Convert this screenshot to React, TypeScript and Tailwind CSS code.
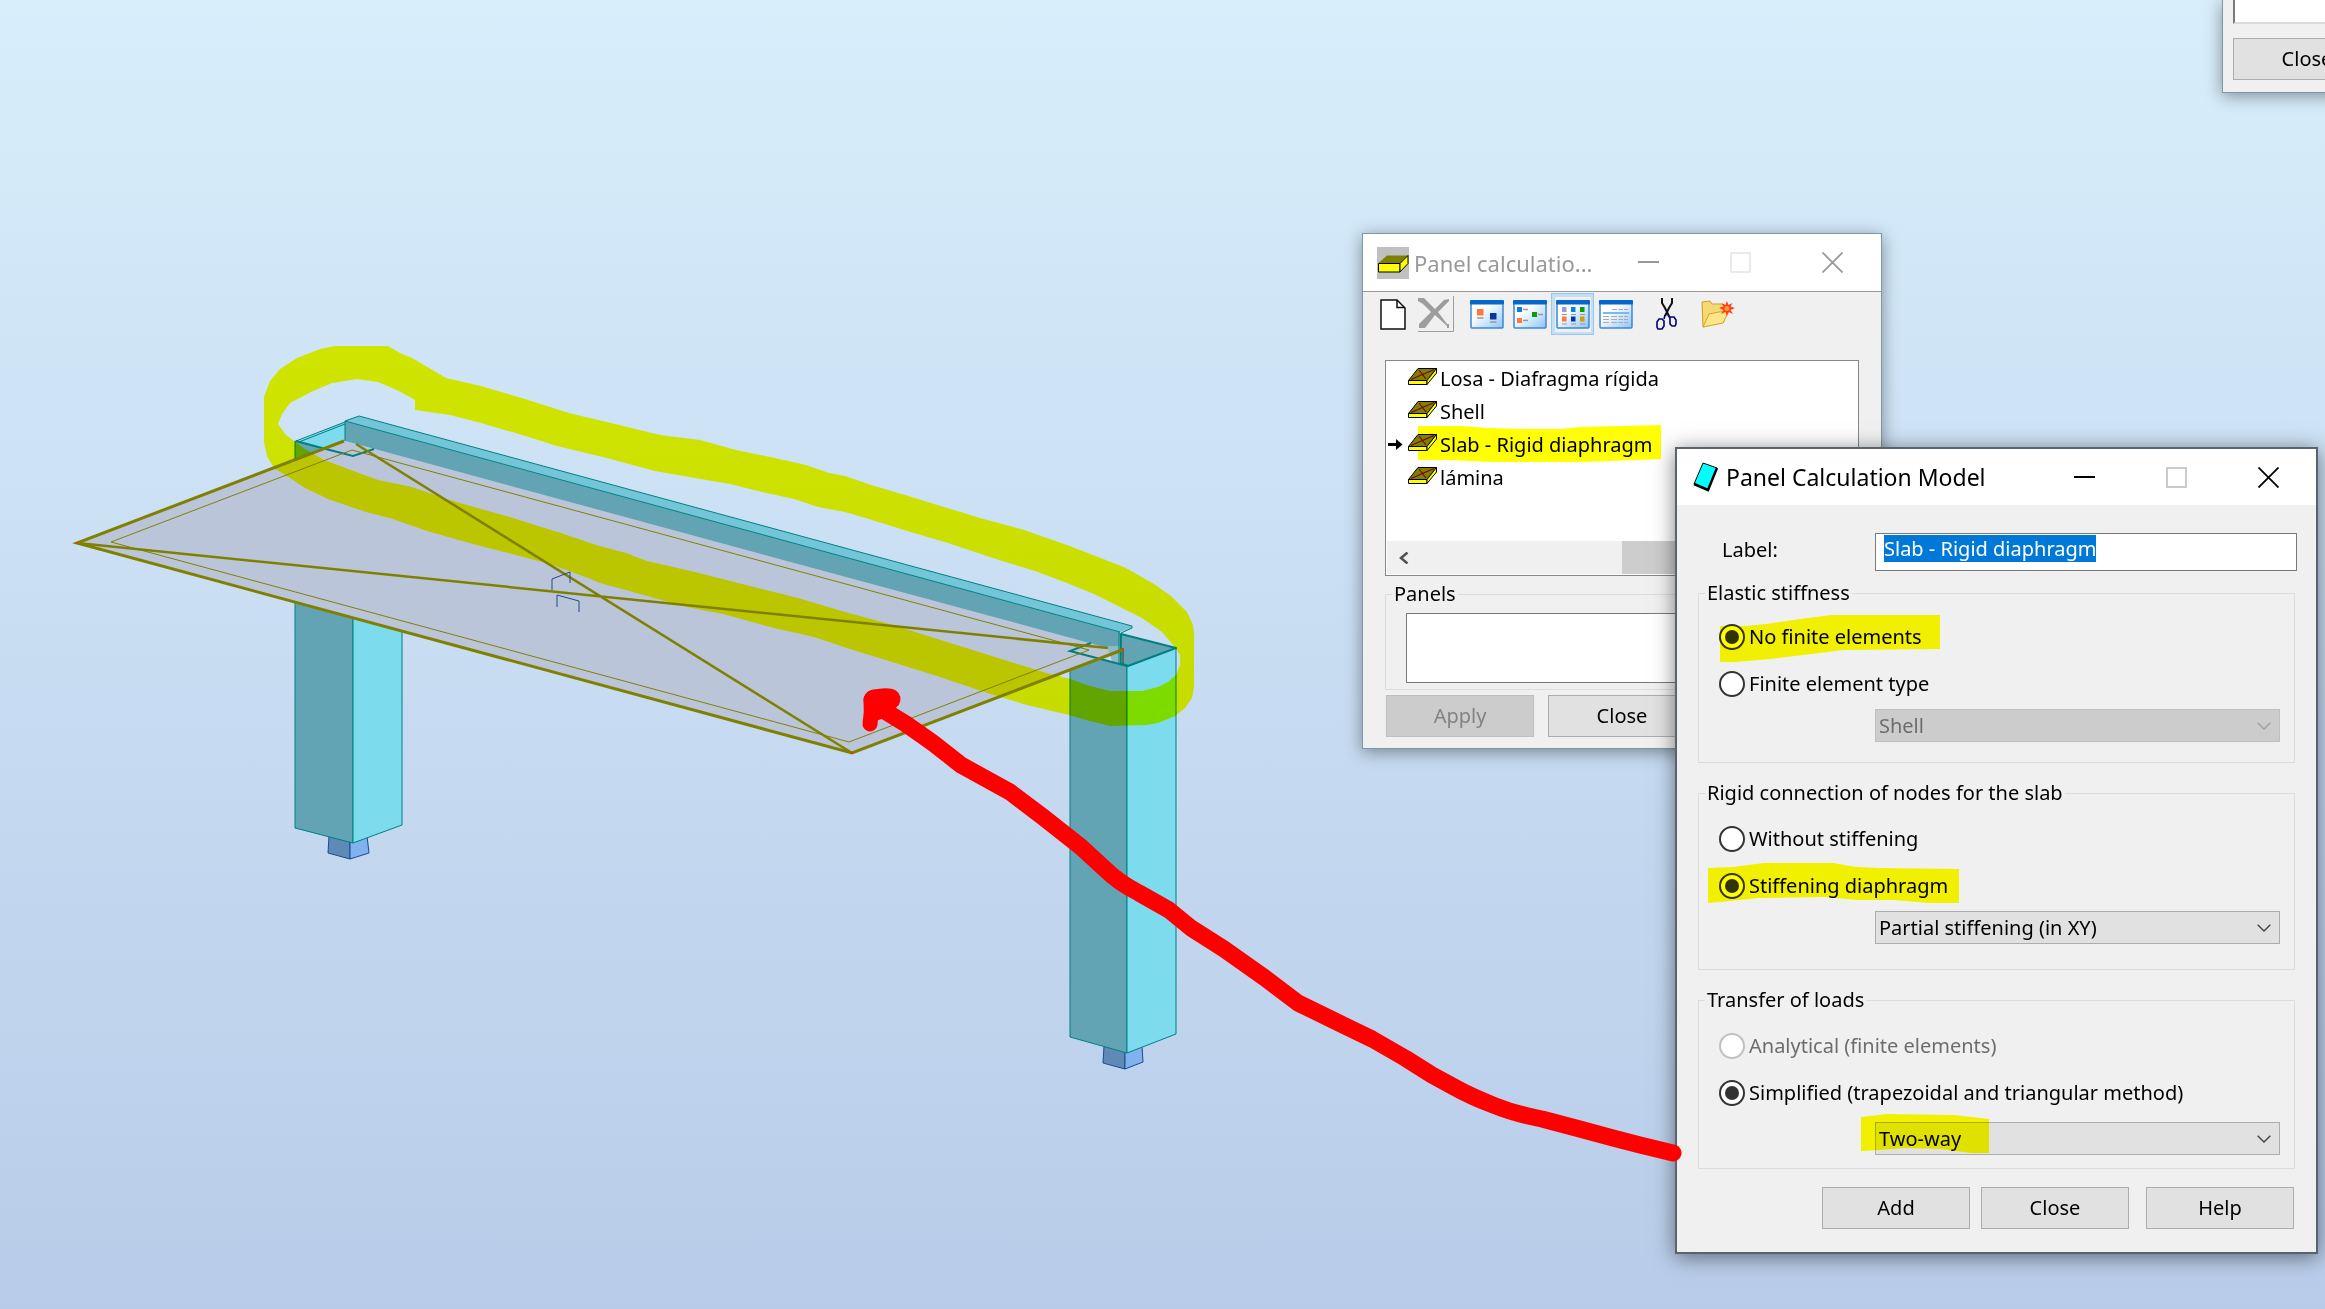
import { useEffect, useRef, useState, type ReactNode } from "react";

/* ---------- 3D model view ---------- */

const MARKER_RING =
  "M335 346 L388 346 L400 353 L412 358 L446 378 L481 386 L525 399 L569 413 L615 424 L660 435 L700 440 L736 450 L770 457 L806 465 L829 473 L845 476 L871 485 L905 495 L944 507 L980 518 L1021 529 L1067 545 L1098 557 L1126 568 L1154 584 L1171 596 L1187 612 L1193 625 L1194 633 L1194 687 L1192 698 L1185 708 L1175 716 L1158 723 L1146 725 L1110 726 L1090 721 L1069 715 L1027 705 L984 692 L940 677 L889 661 L853 650 L814 637 L774 628 L723 614 L687 607 L640 594 L600 583 L588 578 L550 564 L512 554 L473 544 L427 531 L393 519 L366 512 L328 499 L305 488 L290 478 L274 468 L267 456 L264 442 L264 397 L270 381 L280 369 L297 358 L320 349 Z " +
  "M415 410 L415 400 L399 391 L378 382 L357 379 L332 383 L313 391 L290 403 L282 414 L278 424 L286 435 L305 449 L324 460 L351 470 L378 480 L412 487 L446 499 L481 509 L510 517 L538 526 L561 533 L596 545 L626 553 L647 561 L695 572 L750 586 L798 598 L845 612 L893 625 L944 641 L995 657 L1043 672 L1070 679 L1090 686 L1110 691 L1142 691 L1158 687 L1168 682 L1176 675 L1180 665 L1180 655 L1175 647 L1162 632 L1142 618 L1118 606 L1094 594 L1067 583 L1035 571 L999 560 L948 543 L904 530 L869 519 L845 512 L818 507 L794 499 L758 491 L730 484 L695 478 L655 471 L607 458 L557 446 L519 434 L481 423 L450 415 Z";

const ARROW_LINE =
  "M1673 1153 L1640 1145 L1613 1138 L1576 1128 L1542 1119 Q1515 1114 1493 1105 Q1470 1096 1454 1087 L1432 1075 L1405 1058 L1372 1039 L1339 1023 L1298 1003 L1265 978 L1224 949 L1191 928 L1169 910 L1139 893 Q1118 882 1106 870 L1081 847 L1043 817 L1010 792 L961 765 L933 743 L906 724 L880 708";

function ModelView() {
  return (
    <svg viewBox="0 0 2325 1309" className="block h-auto w-full" role="img" aria-label="Model view">
      <g stroke="#008080" strokeWidth="1" strokeLinejoin="round">
        {/* left column */}
        <g stroke="#1c4a8c">
          <path d="M329 836 L328 853 L350 859 L350 836 Z" fill="#5f8ab8" />
          <path d="M350 836 V859 L369 853 L367 836 Z" fill="#80b2ef" />
        </g>
        <path d="M295 441 L353 456 V843 L295 828 Z" fill="#62a4b4" />
        <path d="M353 600 V843 L402 825 V600 Z" fill="#7ddbee" />
        {/* right column */}
        <g stroke="#1c4a8c">
          <path d="M1104 1046 L1103 1063 L1125 1069 V1046 Z" fill="#5f8ab8" />
          <path d="M1125 1046 V1069 L1143 1062 L1142 1046 Z" fill="#80b2ef" />
        </g>
        <path d="M1070 651 L1127 666 V1053 L1070 1037 Z" fill="#62a4b4" />
        <path d="M1127 666 V1053 L1176 1034 V648 Z" fill="#7ddbee" />
        <path d="M1121 634 L1176 648 L1128 666 L1120 663 Z" fill="#62a4b4" strokeWidth="2" />
      </g>
      {/* column head behind the beam */}
      <path d="M298 441 L345 422 V441 L322 448 Z" fill="#7ddbee" />
      {/* slab */}
      <path d="M77 543 L344 441 L1122 650 L852 753 Z" fill="#bbc5d9" />
      {/* beam */}
      <path d="M345 421 L1120 632 L1119 651 L345 441 Z" fill="#62a4b4" />
      <path d="M1107 646 L1120 646 V664 L1112 661 Z" fill="#8fb8c9" />
      <path d="M345 421 L359 416 L1132 626 L1132 628 L1120 632 Z" fill="#73c6d8" />
      <g fill="none" stroke="#008080" strokeWidth="1">
        <path d="M345 441 V421 L359 416 L1132 626 L1132 628 L1121 633 V664 M345 421 L1120 632 M1119 632 V663" />
        <path d="M296 441 L345 422 M299 442 L345 424" />
        <path d="M322 448 L353 456 L374 449 M296 441 L322 448" strokeWidth="2" />
        <path d="M1091 643 L1070 651 L1127 666" strokeWidth="2" />
        <path d="M1123 648 V663" stroke="#404000" />
      </g>
      <g fill="none" stroke="#808000">
        <path d="M344 441 L77 543 L852 753 L1122 650" strokeWidth="3" />
        <path d="M77 543 L1108 648 M356 444 L852 753" strokeWidth="2.5" />
        <path d="M352 450 L111 542 L849 742 L1089 650 Z" strokeWidth="1" />
      </g>
      <path d="M76 542 h2 v2 h-2 Z M851 752 h2 v2 h-2 Z M1122 648 h2 v2 h-2 Z" fill="#ff3000" />
      {/* local axis marks */}
      <path
        d="M552 590 V579 L570 572 V583 M557 607 V595 L579 601 V612"
        fill="none"
        stroke="#1c4a8c"
        strokeWidth="1"
      />
      {/* highlighter ring */}
      <path d={MARKER_RING} fill="#ffff00" fillRule="evenodd" className="mix-blend-multiply" />
    </svg>
  );
}

function ArrowMark() {
  return (
    <svg viewBox="0 0 2325 1309" className="pointer-events-none absolute inset-x-0 top-0 h-auto w-full" aria-hidden="true">
      <g fill="none" stroke="#ff0000" strokeLinecap="round" strokeLinejoin="round">
        <path d={ARROW_LINE} strokeWidth="17" />
        <path d="M874 700 Q884 698 890 699" strokeWidth="21" />
        <path d="M871 700 Q872 712 870 724" strokeWidth="15" />
      </g>
      <path d="M864 696 L895 708 L890 716 L873 722 Z" fill="#ff0000" />
    </svg>
  );
}

/* ---------- Icons ---------- */

function SlabTitleIcon() {
  return (
    <svg width="32" height="32" viewBox="0 0 32 32" className="shrink-0" aria-hidden="true">
      <rect width="32" height="32" fill="#c0c0c0" />
      <g stroke="#000" strokeWidth="1">
        <path d="M1 16.5 L10 8.5 H31 L23 16.5 Z" fill="#808000" stroke="none" />
        <path d="M1.500 16.500 H23 V25 H1.500 Z" fill="#ffff00" />
        <path d="M31 8.500 V16.500 L23 25 V16.500 Z" fill="#ffff00" />
      </g>
    </svg>
  );
}

function SlabItemIcon() {
  return (
    <svg width="29" height="17" viewBox="0 0 29 17" className="shrink-0" aria-hidden="true">
      <g stroke="#000" strokeWidth="1">
        <path d="M.5 12.5 L10 .5 H28.500 L19 12.500 Z" fill="#808000" />
        <path d="M.5 12.500 H19 V16.500 H.5 Z" fill="#ffff00" />
        <path d="M28.500 .5 V5 L19 16.500 V12.500 Z" fill="#ffff00" />
      </g>
      <path d="M3 11.500 L26 1.500 M11 2 L18 11" stroke="#800000" strokeWidth="1.200" fill="none" />
    </svg>
  );
}

function PlateIcon() {
  return (
    <svg width="25" height="30" viewBox="0 0 25 30" className="shrink-0" aria-hidden="true">
      <path d="M10 1 L24 6 L15 28 L1 22 Z" fill="#00ffff" stroke="#000" strokeWidth="1" />
      <path d="M24 6 L15 28 L1 22" fill="none" stroke="#000" strokeWidth="2.500" />
    </svg>
  );
}

function NewIcon() {
  return (
    <svg width="26" height="31" viewBox="0 0 26 31" aria-hidden="true">
      <path d="M1 1 H17 L25 9 V30 H1 Z" fill="#fff" stroke="#111" strokeWidth="1.500" />
      <path d="M17 1 V8.500 H25" fill="none" stroke="#111" strokeWidth="1.500" />
    </svg>
  );
}

function DeleteIcon() {
  return (
    <svg width="36" height="36" viewBox="0 0 36 36" aria-hidden="true">
      <path
        d="M0 2 H6 L17 13 L26 4 L31 3 V5 L20 16 L29 28 H31 V32 H29 V30 L17 19 L7 32 H1 V28 L13 16 L5 8 L0 5 Z"
        fill="#9d9d9d"
      />
      <path d="M35.500 0 V35.500 H0" fill="none" stroke="#9d9d9d" />
    </svg>
  );
}

function ViewFrame({ children }: { children: ReactNode }) {
  return (
    <svg width="34" height="29" viewBox="0 0 34 29" aria-hidden="true">
      <defs>
        <linearGradient id="pane" x1="0" y1="0" x2="1" y2="1">
          <stop offset="0.35" stopColor="#ffffff" />
          <stop offset="1" stopColor="#8cc4f8" />
        </linearGradient>
      </defs>
      <rect x="1" y="1" width="32" height="27" rx="1" fill="url(#pane)" stroke="#3b86d4" strokeWidth="1.500" />
      <rect x="0" y="0" width="34" height="4.500" rx="1" fill="#0765cc" />
      {children}
    </svg>
  );
}

function LargeIconsIcon() {
  return (
    <ViewFrame>
      <rect x="7" y="9" width="6.500" height="6.500" fill="#ff7740" />
      <rect x="20" y="13" width="6.500" height="6.500" fill="#0a35a0" />
      <path d="M7 18 H13.500 M20 22 H26.500" stroke="#999" strokeWidth="1.500" />
    </ViewFrame>
  );
}

function SmallIconsIcon() {
  return (
    <ViewFrame>
      <rect x="4" y="7" width="5" height="5" fill="#0a7ee8" />
      <rect x="4" y="18" width="5" height="5" fill="#ff7740" />
      <rect x="19" y="12" width="5" height="5" fill="#0a9a0a" />
      <path d="M10 9.500 H15 M10 20.500 H15 M25 14.500 H30" stroke="#999" strokeWidth="1.500" />
    </ViewFrame>
  );
}

function ListIcon() {
  return (
    <ViewFrame>
      <rect x="6" y="7" width="4.500" height="5" fill="#a096d8" />
      <rect x="15" y="7" width="4.500" height="5" fill="#0a7ee8" />
      <rect x="24" y="7" width="4.500" height="5" fill="#0a9a0a" />
      <rect x="6" y="16.500" width="4.500" height="5" fill="#ff7740" />
      <rect x="15" y="16.500" width="4.500" height="5" fill="#0a35a0" />
      <rect x="24" y="16.500" width="4.500" height="5" fill="#d0a000" />
      <path d="M6 14.500 H11 M15 14.500 H20 M24 14.500 H29 M6 24 H11 M15 24 H20 M24 24 H29" stroke="#999" strokeWidth="1.200" />
    </ViewFrame>
  );
}

function DetailsIcon() {
  return (
    <ViewFrame>
      <path d="M4 13 H30" stroke="#7ab8f4" strokeWidth="2" />
      <path
        d="M13 9.500 H18 M19.500 9.500 H24 M25 9.500 H29 M4 16.500 H10 M12 16.500 H18 M19.500 16.500 H24 M25 16.500 H29 M4 19.500 H10 M12 19.500 H18 M19.500 19.500 H24 M25 19.500 H29 M4 22.500 H10 M12 22.500 H18 M19.500 22.500 H24 M25 22.500 H29"
        stroke="#aaa"
        strokeWidth="1.200"
      />
    </ViewFrame>
  );
}

function CutIcon() {
  return (
    <svg width="22" height="34" viewBox="0 0 22 34" fill="none" aria-hidden="true">
      <path d="M6 1 V6 L9 11 L13 19 M16 1 V6 L13 11 L9 19" stroke="#111" strokeWidth="2" />
      <path
        d="M9 18 L8 22 M12 18 L14 21 M3 22 H6 L8 24 V29 L6 32 H2 L1 30 V25 Z M14 20 H18 L20 23 V27 L19 29 H16 L14 27 Z"
        stroke="#00007d"
        strokeWidth="1.600"
      />
    </svg>
  );
}

function FolderIcon() {
  return (
    <svg width="34" height="29" viewBox="0 0 34 29" aria-hidden="true">
      <path d="M1 2 L9 1 L11 4 H21 L23 6 V22 L2 27 Z" fill="#f6d976" stroke="#cf9f1c" strokeWidth="1" />
      <path d="M2 27 L8 14 L18 12 L28 11 L22 23 Z" fill="#ffe68c" stroke="#d8a420" strokeWidth="1" />
      <path
        d="M26 1 L27.500 5 L31.500 3 L29.500 6.500 L34 8 L29.500 10 L32 14 L27.500 12 L26 16 L24.500 12 L20 14 L22.500 10 L18 8 L22.500 6.500 L20.500 3 L24.500 5 Z"
        fill="#ff3c14"
      />
      <circle cx="26" cy="8.500" r="2.500" fill="#ff9a3c" />
    </svg>
  );
}

function Chevron({ className }: { className: string }) {
  return (
    <svg width="14" height="8" viewBox="0 0 14 8" className={className} aria-hidden="true">
      <path d="M.7 .7 L7 7 L13.300 .7" fill="none" stroke="currentColor" strokeWidth="1.400" />
    </svg>
  );
}

/* ---------- Shared controls ---------- */

function Highlight({ points }: { points: string }) {
  return (
    <svg className="pointer-events-none absolute left-0 top-0 h-px w-px overflow-visible mix-blend-multiply" aria-hidden="true">
      <polygon points={points} fill="#ffff00" />
    </svg>
  );
}

function CaptionButtons({ tone }: { tone: string }) {
  return (
    <div className={`ml-auto flex h-full ${tone}`}>
      <button type="button" aria-label="Minimize" className="grid h-full w-[92px] place-items-center">
        <svg width="21" height="21" viewBox="0 0 21 21" aria-hidden="true">
          <path d="M0 10 H21" stroke="currentColor" strokeWidth="2" />
        </svg>
      </button>
      <button type="button" aria-label="Maximize" disabled className="grid h-full w-[92px] place-items-center opacity-20">
        <svg width="21" height="21" viewBox="0 0 21 21" aria-hidden="true">
          <rect x="1" y="1" width="19" height="19" fill="none" stroke="currentColor" strokeWidth="2" />
        </svg>
      </button>
      <button type="button" aria-label="Close window" className="grid h-full w-[92px] place-items-center">
        <svg width="21" height="21" viewBox="0 0 21 21" aria-hidden="true">
          <path d="M.5 .5 L20.500 20.500 M20.500 .5 L.5 20.500" stroke="currentColor" strokeWidth="1.800" />
        </svg>
      </button>
    </div>
  );
}

function PushButton({ children, disabled = false }: { children: ReactNode; disabled?: boolean }) {
  return (
    <button
      type="button"
      disabled={disabled}
      className="h-[42px] w-[148px] shrink-0 border border-[#adadad] bg-[#e1e1e1] text-black disabled:border-[#bfbfbf] disabled:bg-[#cccccc] disabled:text-[#838383]"
    >
      {children}
    </button>
  );
}

function Radio(props: {
  name: string;
  label: string;
  checked: boolean;
  onSelect?: () => void;
  disabled?: boolean;
  highlight?: string;
}) {
  const { name, label, checked, onSelect, disabled = false, highlight } = props;
  return (
    <label className="relative flex h-[26px] w-fit items-center gap-1">
      <input
        type="radio"
        name={name}
        checked={checked}
        disabled={disabled}
        onChange={() => onSelect?.()}
        className="grid size-[26px] shrink-0 appearance-none place-items-center rounded-full border-2 border-[#333333] bg-white before:size-[14px] before:rounded-full checked:before:bg-[#333333] disabled:border-[#c0c0c0]"
      />
      <span className={disabled ? "whitespace-nowrap text-[#6d6d6d]" : "whitespace-nowrap text-black"}>{label}</span>
      {highlight && <Highlight points={highlight} />}
    </label>
  );
}

function DropDown(props: { label: string; options: string[]; disabled?: boolean; highlight?: string }) {
  const { label, options, disabled = false, highlight } = props;
  return (
    <div className="relative ml-[156px] mr-[14px]">
      <select
        aria-label={label}
        disabled={disabled}
        className="block h-[33px] w-full appearance-none border border-[#adadad] bg-[#e1e1e1] pl-[3px] pr-8 text-black opacity-100 disabled:border-[#bfbfbf] disabled:bg-[#cccccc] disabled:text-[#6d6d6d]"
      >
        {options.map((option) => (
          <option key={option}>{option}</option>
        ))}
      </select>
      <Chevron
        className={
          disabled
            ? "pointer-events-none absolute right-[9px] top-[13px] text-[#a0a0a0]"
            : "pointer-events-none absolute right-[9px] top-[13px] text-[#444444]"
        }
      />
      {highlight && <Highlight points={highlight} />}
    </div>
  );
}

function Group({ title, className, children }: { title: string; className: string; children: ReactNode }) {
  return (
    <fieldset className="min-w-0 border border-[#dcdcdc]">
      <legend className="ml-[6px] whitespace-nowrap px-0.5 leading-6">{title}</legend>
      <div className={className}>{children}</div>
    </fieldset>
  );
}

/* ---------- Windows ---------- */

const PANEL_TYPES: { name: string; highlight?: string }[] = [
  { name: "Losa - Diafragma rígida" },
  { name: "Shell" },
  {
    name: "Slab - Rigid diaphragm",
    highlight: "32,-2 76,-2 102,0 143,1 174,1 195,-1 275,-3 275,31 198,34 106,34 64,32 32,32",
  },
  { name: "lámina" },
];

const TOOL = "grid h-[42px] w-[43px] place-items-center";

function PanelListWindow() {
  return (
    <section
      aria-label="Panel calculation"
      className="absolute left-[1362px] top-[233px] w-[520px] border border-[#7f95a8] bg-[#f0f0f0] shadow-[0_3px_16px_rgba(0,0,0,0.4)]"
    >
      <header className="flex h-[58px] items-center border-b border-[#999999] bg-white pl-[14px] pr-[3px]">
        <SlabTitleIcon />
        <h2 className="ml-[5px] whitespace-nowrap text-[22px] leading-7 text-[#999999]">Panel calculatio...</h2>
        <CaptionButtons tone="text-[#999999]" />
      </header>
      <div className="flex pl-2 pt-px" role="toolbar" aria-label="Panel tools">
        <button type="button" aria-label="New" className={TOOL}><NewIcon /></button>
        <button type="button" aria-label="Delete" className={TOOL}><DeleteIcon /></button>
        <div className="ml-2 flex">
          <button type="button" aria-label="Large icons" className={TOOL}><LargeIconsIcon /></button>
          <button type="button" aria-label="Small icons" className={TOOL}><SmallIconsIcon /></button>
          <button
            type="button"
            aria-label="List"
            aria-pressed="true"
            className="grid h-[42px] w-[43px] place-items-center border border-[#90c8f6] bg-[#c4def3]"
          >
            <span className="bg-[#f0f0f0] px-px py-[3px]"><ListIcon /></span>
          </button>
          <button type="button" aria-label="Details" className={TOOL}><DetailsIcon /></button>
        </div>
        <button type="button" aria-label="Cut" className="ml-2 grid h-[42px] w-[43px] place-items-center"><CutIcon /></button>
        <button type="button" aria-label="Open library" className="ml-2 grid h-[42px] w-[43px] place-items-center"><FolderIcon /></button>
      </div>
      <div className="px-[22px] pb-[11px] pt-[25px]">
        <div className="flex h-[216px] flex-col border border-[#828790] bg-white">
          <ul className="grow pt-px">
            {PANEL_TYPES.map((item) => (
              <li key={item.name} className="relative flex h-[33px] items-center">
                <span className="flex w-[22px] shrink-0 items-center pl-[2px]">
                  {item.highlight && (
                    <svg width="15" height="11" viewBox="0 0 15 11" aria-hidden="true">
                      <path d="M0 4 H8 V0 L14.500 5.500 L8 11 V7 H0 Z" fill="#000" />
                    </svg>
                  )}
                </span>
                <span className="mb-1"><SlabItemIcon /></span>
                <span className="ml-[3px] whitespace-nowrap leading-6">{item.name}</span>
                {item.highlight && <Highlight points={item.highlight} />}
              </li>
            ))}
          </ul>
          <div className="mx-px mb-px flex h-[33px] items-center bg-[#f0f0f0]">
            <svg width="10" height="12" viewBox="0 0 10 12" className="ml-3" aria-hidden="true">
              <path d="M8.500 .5 L2 6 L8.500 11.500" fill="none" stroke="#505050" strokeWidth="2.500" />
            </svg>
            <div className="ml-auto mr-8 h-full w-[203px] bg-[#cdcdcd]" />
          </div>
        </div>
        <div className="mt-[6px]">
          <Group title="Panels" className="px-5 pb-[6px] pt-[7px]">
            <textarea aria-label="Panels" className="block h-[70px] w-full resize-none border border-[#7a7a7a] bg-white" />
          </Group>
        </div>
        <div className="mt-[5px] flex gap-[14px] pl-px">
          <PushButton disabled>Apply</PushButton>
          <PushButton>Close</PushButton>
        </div>
      </div>
    </section>
  );
}

function CalculationModelWindow() {
  const labelRef = useRef<HTMLInputElement>(null);
  const [stiffness, setStiffness] = useState("none");
  const [rigid, setRigid] = useState("diaphragm");

  useEffect(() => {
    labelRef.current?.focus();
    labelRef.current?.select();
  }, []);

  return (
    <section
      aria-label="Panel Calculation Model"
      className="absolute left-[1675px] top-[447px] w-[643px] border-2 border-[#59636e] bg-[#f0f0f0] shadow-[0_3px_20px_rgba(0,0,0,0.5)]"
    >
      <header className="flex h-[56px] items-center bg-white pl-4 pr-0.5">
        <PlateIcon />
        <h2 className="ml-2 whitespace-nowrap text-[23px] leading-7 text-black">Panel Calculation Model</h2>
        <CaptionButtons tone="text-black" />
      </header>
      <form className="px-[21px] pb-[23px] pt-7" onSubmit={(event) => event.preventDefault()}>
        <div className="-mr-0.5 flex items-center">
          <label htmlFor="panel-label" className="w-[177px] shrink-0 pb-1 pl-6">Label:</label>
          <input
            id="panel-label"
            ref={labelRef}
            defaultValue="Slab - Rigid diaphragm"
            spellCheck={false}
            className="h-[38px] min-w-0 grow border border-[#7a7a7a] bg-white pb-2 pl-2 leading-6 outline-none selection:bg-[#0078d7] selection:text-white"
          />
        </div>
        <div className="mt-[10px] flex flex-col gap-[18px]">
          <Group title="Elastic stiffness" className="pb-[20px] pl-5 pt-[19px]">
            <div className="flex flex-col gap-[21px]">
              <Radio
                name="stiffness"
                label="No finite elements"
                checked={stiffness === "none"}
                onSelect={() => setStiffness("none")}
                highlight="1,2 26,2 47,0 89,-6 113,-9 221,-9 221,25 124,26 93,30 51,35 16,38 1,38"
              />
              <Radio
                name="stiffness"
                label="Finite element type"
                checked={stiffness === "type"}
                onSelect={() => setStiffness("type")}
              />
            </div>
            <div className="mt-3">
              <DropDown label="Finite element type" options={["Shell"]} disabled={stiffness !== "type"} />
            </div>
          </Group>
          <Group title="Rigid connection of nodes for the slab" className="pb-[25px] pl-5 pt-[21px]">
            <div className="flex flex-col gap-[21px]">
              <Radio
                name="rigid"
                label="Without stiffening"
                checked={rigid === "without"}
                onSelect={() => setRigid("without")}
              />
              <Radio
                name="rigid"
                label="Stiffening diaphragm"
                checked={rigid === "diaphragm"}
                onSelect={() => setRigid("diaphragm")}
                highlight="-11,-5 14,-6 45,-10 114,-10 137,-6 160,-5 240,-4 240,30 210,30 176,27 139,27 106,24 39,25 1,29 -11,30"
              />
            </div>
            <div className="mt-3">
              <DropDown label="Diaphragm stiffening" options={["Partial stiffening (in XY)"]} />
            </div>
          </Group>
          <Group title="Transfer of loads" className="pb-[13px] pl-5 pt-[21px]">
            <div className="flex flex-col gap-[21px]">
              <Radio name="loads" label="Analytical (finite elements)" checked={false} disabled />
              <Radio name="loads" label="Simplified (trapezoidal and triangular method)" checked />
            </div>
            <div className="mt-4">
              <DropDown
                label="Load direction"
                options={["Two-way"]}
                highlight="-14,-5 12,-8 79,-7 114,-3 114,31 96,31 66,27 29,26 4,28 -14,29"
              />
            </div>
          </Group>
        </div>
        <div className="mt-[18px] flex justify-end pr-px">
          <PushButton>Add</PushButton>
          <span className="w-[11px]" />
          <PushButton>Close</PushButton>
          <span className="w-[17px]" />
          <PushButton>Help</PushButton>
        </div>
      </form>
    </section>
  );
}

function CornerWindow() {
  return (
    <section
      aria-label="Panel"
      className="absolute left-[2222px] top-0 w-[400px] border-b border-l border-[#7f95a8] bg-[#f0f0f0] pb-3 pl-[10px] shadow-[0_3px_16px_rgba(0,0,0,0.4)]"
    >
      <div className="mb-[14px] h-6 border-b-2 border-l-2 border-b-[#dcdcdc] border-l-[#7a7a7a] bg-white" />
      <PushButton>Close</PushButton>
    </section>
  );
}

export default function App() {
  return (
    <main className="relative min-h-screen w-full overflow-hidden bg-linear-to-b from-[#d8eefb] to-[#b8cce9] font-['Noto_Sans',sans-serif] text-[20px] leading-6 text-black">
      <ModelView />
      <CornerWindow />
      <PanelListWindow />
      <CalculationModelWindow />
      <ArrowMark />
    </main>
  );
}
